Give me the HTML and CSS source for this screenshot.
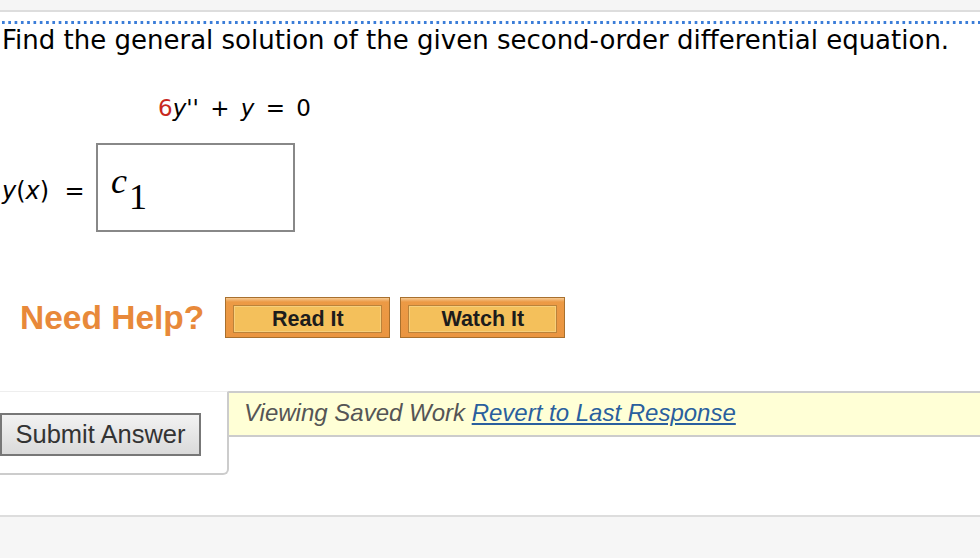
FILE: index.html
```html
<!DOCTYPE html>
<html>
<head>
<meta charset="utf-8">
<link rel="stylesheet" href="styles.css">
</head>
<body>
<div class="topbar"></div>
<div class="question">
  <div class="dots"></div>
  <p class="prompt">Find the general solution of the given second-order differential equation.</p>
  <div class="equation"><span class="red">6</span><i>y''</i> + <i>y</i> = 0</div>
  <div class="answer">
    <span class="lhs"><i>y</i>(<i>x</i>) &nbsp;=</span>
    <div class="box"><span class="c">c</span><span class="sub">1</span></div>
  </div>
  <div class="help">
    <span class="need">Need Help?</span>
    <span class="hbtn"><span class="hin">Read It</span></span>
    <span class="hbtn"><span class="hin">Watch It</span></span>
  </div>
  <div class="submitrow">
    <div class="submitpanel"><button class="submit">Submit Answer</button></div>
    <div class="saved"><i>Viewing Saved Work</i> <a href="#">Revert to Last Response</a></div>
  </div>
</div>
<div class="footer"></div>
</body>
</html>
```
FILE: styles.css
```css
html, body { margin: 0; padding: 0; background: #fff; }
body { width: 980px; height: 558px; overflow: hidden; display: flex; flex-direction: column; font-family: "DejaVu Sans", Verdana, sans-serif; color: #000; }
.topbar { height: 10px; flex: none; background: #f5f5f5; border-bottom: 2px solid #ddd; }
.question { flex: 1; padding-top: 9px; }
.dots { height: 3px; margin-left: 2px; background-image: linear-gradient(to right, #3b7dd8 2.5px, transparent 2.5px); background-size: 6.3px 3px; }
.prompt { margin: 1px 0 0 2px; font-size: 26px; line-height: 30px; }
.equation { margin: 40px 0 0 158px; font-size: 23px; line-height: 27px; word-spacing: 4px; }
.equation .red { color: #c8281e; }
.answer { display: flex; align-items: flex-start; margin-top: 21px; }
.lhs { font-size: 24px; line-height: 28px; margin-left: 2px; width: 94px; padding-top: 34px; }
.box { width: 199px; height: 89px; box-sizing: border-box; border: 2px solid #888; font-family: "Liberation Serif", "DejaVu Serif", serif; font-size: 36px; line-height: 1; padding: 18px 0 0 13px; white-space: nowrap; }
.box .c { font-style: italic; vertical-align: 16px; }
.box .sub { margin-left: 2px; }
.help { display: flex; align-items: center; margin-top: 65px; margin-left: 20px; }
.need { font-family: "Liberation Sans", Arial, sans-serif; font-weight: bold; font-size: 33.5px; color: #e8893a; margin-right: 21px; }
.hbtn { display: block; width: 165px; height: 41px; box-sizing: border-box; border: 1px solid #a8702e; background: linear-gradient(#f6c992 0, #ec9a45 4px, #ea9541 100%); padding: 7px 7px 4px 7px; margin-right: 10px; }
.hin { display: flex; align-items: center; justify-content: center; height: 100%; box-sizing: border-box; border: 1px solid #bb833a; background: #f4c05b; box-shadow: inset 0 0 0 1px #f7cf7c; font-family: "Liberation Sans", Arial, sans-serif; font-weight: bold; font-size: 21.5px; color: #1c1c1c; }
.submitrow { display: flex; margin-top: 53px; }
.submitpanel { width: 229px; height: 84px; box-sizing: border-box; border-top: 1px solid #eee; border-right: 2px solid #ccc; border-bottom: 2px solid #ccc; border-bottom-right-radius: 6px; padding-top: 21px; }
.submit { display: block; width: 201px; height: 43px; border: 2px solid #777; background: linear-gradient(#f2f2f2, #dadada); font-family: "Liberation Sans", Arial, sans-serif; font-size: 25.5px; color: #333; padding: 0; margin: 0; }
.saved { flex: 1; height: 46px; box-sizing: border-box; background: #ffffd6; border-top: 2px solid #ccc; border-bottom: 2px solid #ccc; font-family: "Liberation Sans", Arial, sans-serif; font-size: 24px; color: #555; padding: 6px 0 0 15px; white-space: nowrap; }
.saved a { color: #2a5f9e; font-style: italic; text-decoration: underline; }
.footer { height: 41px; flex: none; background: #f6f6f6; border-top: 2px solid #ddd; }
```
